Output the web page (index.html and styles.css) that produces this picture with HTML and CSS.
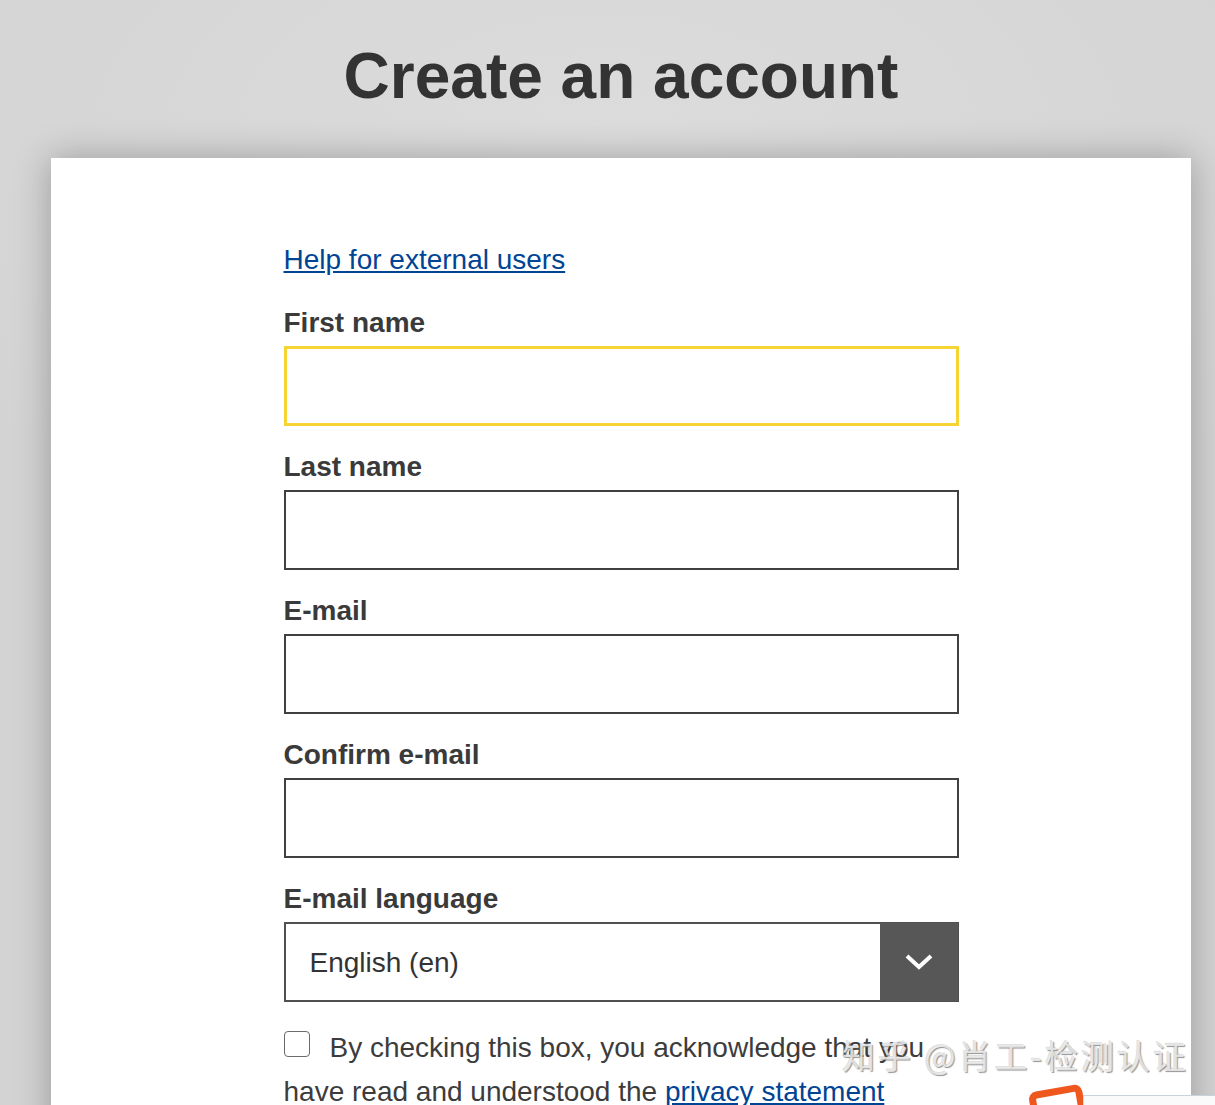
FILE: index.html
```html
<!DOCTYPE html>
<html lang="en">
<head>
<meta charset="utf-8">
<title>Create an account</title>
<link rel="stylesheet" href="styles.css">
</head>
<body>
<div class="page">
  <h1 class="title">Create an account</h1>
  <main class="card">
    <form class="form">
      <a class="help-link" href="#">Help for external users</a>
      <div class="field">
        <label class="label" for="fn">First name</label>
        <input class="input input-focus" id="fn" type="text">
      </div>
      <div class="field">
        <label class="label" for="ln">Last name</label>
        <input class="input" id="ln" type="text">
      </div>
      <div class="field">
        <label class="label" for="em">E-mail</label>
        <input class="input" id="em" type="text">
      </div>
      <div class="field">
        <label class="label" for="cem">Confirm e-mail</label>
        <input class="input" id="cem" type="text">
      </div>
      <div class="field">
        <label class="label" for="lang">E-mail language</label>
        <div class="select-wrap">
          <select class="select" id="lang">
            <option>English (en)</option>
          </select>
          <span class="select-btn">
            <svg width="28" height="16" viewBox="0 0 28 16"><path d="M2 2 L14 13 L26 2" fill="none" stroke="#fff" stroke-width="4"/></svg>
          </span>
        </div>
      </div>
      <p class="consent"><input class="check" type="checkbox" id="ack"><label for="ack">By checking this box, you acknowledge that you have read and understood the <a class="link" href="#">privacy statement</a></label></p>
    </form>
  </main>
</div>
<div class="watermark">知乎 @肖工-检测认证</div>
<div class="corner-logo"></div>
<div class="corner-panel"></div>
</body>
</html>
```

FILE: styles.css
```css
html, body {
  margin: 0;
  height: 100%;
}
body {
  font-family: "Liberation Sans", Arial, sans-serif;
  color: #404040;
  background: radial-gradient(ellipse 70% 40% at 50% 12%, #dcdcdc 0%, #d3d3d3 100%);
  background-color: #d3d3d3;
  overflow: hidden;
}
.page {
  width: 1140px;
  margin-left: 51px;
}
.title {
  margin: 38px 0 0;
  height: 120px;
  font-size: 64px;
  line-height: 77px;
  font-weight: bold;
  color: #333;
  text-align: center;
}
.card {
  background: #fff;
  box-shadow: 0 0 34px rgba(0, 0, 0, 0.28);
  padding: 85px 0 60px;
  min-height: 1000px;
}
.form {
  width: 675px;
  margin: 0 auto;
  font-size: 28px;
}
.help-link {
  display: inline-block;
  line-height: 34px;
  color: #004494;
  text-decoration: underline;
  margin-bottom: 29px;
}
.field {
  display: flex;
  flex-direction: column;
  margin-bottom: 24px;
}
.label {
  font-weight: bold;
  line-height: 34px;
  margin-bottom: 6px;
  color: #3a3a3a;
}
.input {
  box-sizing: border-box;
  height: 80px;
  width: 675px;
  border: 2px solid #404040;
  margin: 0;
  padding: 0 22px;
  font: inherit;
  background: #fff;
}
.input-focus {
  border: 3px solid #f5d434;
  outline: none;
}
.select-wrap {
  position: relative;
  height: 80px;
}
.select {
  appearance: none;
  -webkit-appearance: none;
  box-sizing: border-box;
  width: 675px;
  height: 80px;
  border: 2px solid #505050;
  border-radius: 0;
  background: #fff;
  font-family: inherit;
  font-size: 28px;
  color: #333;
  padding: 0 24px;
  margin: 0;
}
.select-btn {
  position: absolute;
  right: 1px;
  top: 1px;
  width: 78px;
  height: 78px;
  background: #575757;
  display: flex;
  align-items: center;
  justify-content: center;
}
.consent {
  margin: 0;
  line-height: 44px;
  color: #3c3c3c;
}
.check {
  appearance: none;
  -webkit-appearance: none;
  width: 26px;
  height: 26px;
  box-sizing: border-box;
  border: 1.5px solid #6a6a6a;
  border-radius: 4px;
  background: #fff;
  margin: 0 20px 0 0;
  vertical-align: baseline;
}
.link {
  color: #004494;
  text-decoration: underline;
}
.watermark {
  position: absolute;
  left: 842px;
  top: 1033px;
  font-family: "Noto Sans CJK SC", sans-serif;
  font-size: 33px;
  line-height: 44px;
  color: rgba(238, 238, 238, 0.85);
  text-shadow: 1px 1px 1px rgba(90, 90, 90, 0.65), -1px -1px 0 rgba(150, 150, 150, 0.3);
  letter-spacing: 3px;
  pointer-events: none;
}
.corner-logo {
  position: absolute;
  left: 1030px;
  top: 1088px;
  width: 54px;
  height: 30px;
  border: 7px solid #f0571f;
  border-radius: 8px;
  transform: rotate(-10deg);
  box-sizing: border-box;
}
.corner-panel {
  position: absolute;
  left: 1083px;
  top: 1095px;
  width: 140px;
  height: 20px;
  background: #fafafa;
  border-top: 1px solid #c9d3de;
  border-left: 1px solid #d9dfe6;
}
```
